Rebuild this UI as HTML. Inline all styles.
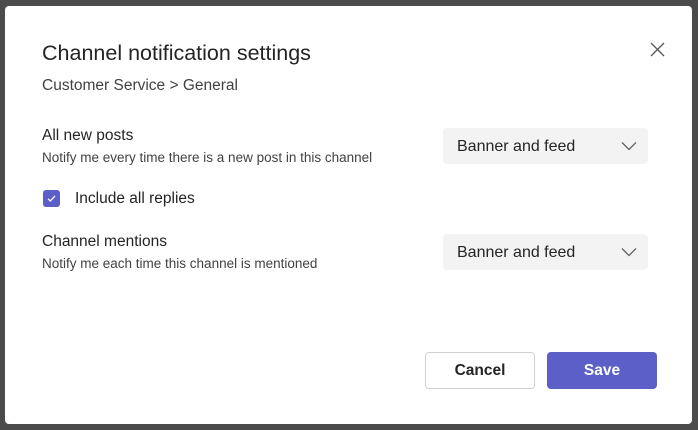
<!DOCTYPE html>
<html><head><style>
*{margin:0;padding:0;box-sizing:border-box}
body{width:698px;height:430px;background:#4b4b4b;position:relative;overflow:hidden;font-family:"Liberation Sans",sans-serif;color:#242424}
.dlg{position:absolute;left:5px;top:6px;width:687px;height:418px;background:#fff;border-radius:4px}
.a{position:absolute;white-space:nowrap}
.dd{position:absolute;left:443px;width:205px;height:36px;background:#f3f3f3;border-radius:4px;font-size:16px;color:#242424}
.dd span{position:absolute;left:14px;top:10px}
.dd svg{position:absolute;right:11px;top:13px}
.btn{position:absolute;top:352px;height:37px;border-radius:4px;font-size:15.5px;font-weight:bold;text-align:center;line-height:38px}
</style></head><body>
<div class="dlg"></div>
<div class="a" style="left:42px;top:41px;font-size:21.5px;color:#242424">Channel notification settings</div>
<div class="a" style="left:42px;top:77px;font-size:15.5px;color:#424242">Customer Service &gt; General</div>
<svg class="a" style="left:650px;top:42px" width="15" height="15" viewBox="0 0 15 15"><path d="M1 1L14 14M14 1L1 14" stroke="#555" stroke-width="1.3"/></svg>
<div class="a" style="left:42px;top:127px;font-size:15.5px">All new posts</div>
<div class="a" style="left:42px;top:150px;font-size:13.5px;color:#424242">Notify me every time there is a new post in this channel</div>
<div class="dd" style="top:128px"><span>Banner and feed</span><svg width="16" height="10" viewBox="0 0 16 10"><path d="M1 1.5L8 8.5L15 1.5" fill="none" stroke="#616161" stroke-width="1.3"/></svg></div>
<div class="a" style="left:43px;top:190px;width:17px;height:17px;background:#5b5fc7;border-radius:3px"><svg width="17" height="17" viewBox="0 0 17 17"><path d="M5 8.8L7.3 11L12 6" fill="none" stroke="#fff" stroke-width="1.3"/></svg></div>
<div class="a" style="left:75px;top:190px;font-size:15.5px">Include all replies</div>
<div class="a" style="left:42px;top:233px;font-size:15.5px">Channel mentions</div>
<div class="a" style="left:42px;top:256px;font-size:13.5px;color:#424242">Notify me each time this channel is mentioned</div>
<div class="dd" style="top:234px"><span>Banner and feed</span><svg width="16" height="10" viewBox="0 0 16 10"><path d="M1 1.5L8 8.5L15 1.5" fill="none" stroke="#616161" stroke-width="1.3"/></svg></div>
<div class="btn" style="left:425px;width:110px;border:1px solid #d1d1d1;background:#fff;color:#242424;line-height:36px">Cancel</div>
<div class="btn" style="left:547px;width:110px;background:#5b5fc7;color:#fff">Save</div>
</body></html>
